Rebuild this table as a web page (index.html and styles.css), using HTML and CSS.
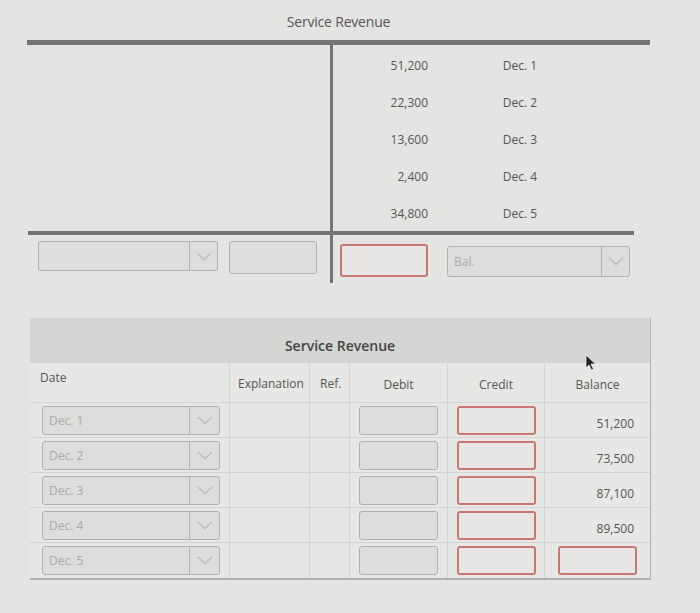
FILE: index.html
```html
<!DOCTYPE html>
<html>
<head>
<meta charset="utf-8">
<link rel="stylesheet" href="styles.css">
</head>
<body>
<div class="page">
  <section class="tacct">
    <div class="tacct-title">Service Revenue</div>
    <div class="tacct-grid">
      <div class="tside tleft">
        <div class="tbody"></div>
        <div class="tinputs">
          <div class="dd dd-left"><span class="dd-text"></span><span class="dd-arrow"><svg width="16" height="9" viewBox="0 0 16 9"><polyline points="1,1 8,7.5 15,1" fill="none" stroke="#bcbcba" stroke-width="1.4"/></svg></span></div>
          <div class="box box-grey box-amt"></div>
        </div>
      </div>
      <div class="tside tright">
        <div class="tbody">
          <div class="trow"><span class="tamt">51,200</span><span class="tdate">Dec. 1</span></div>
          <div class="trow"><span class="tamt">22,300</span><span class="tdate">Dec. 2</span></div>
          <div class="trow"><span class="tamt">13,600</span><span class="tdate">Dec. 3</span></div>
          <div class="trow"><span class="tamt">2,400</span><span class="tdate">Dec. 4</span></div>
          <div class="trow"><span class="tamt">34,800</span><span class="tdate">Dec. 5</span></div>
        </div>
        <div class="tinputs">
          <div class="box box-red box-amt"></div>
          <div class="dd dd-bal"><span class="dd-text">Bal.</span><span class="dd-arrow"><svg width="16" height="9" viewBox="0 0 16 9"><polyline points="1,1 8,7.5 15,1" fill="none" stroke="#bcbcba" stroke-width="1.4"/></svg></span></div>
        </div>
      </div>
    </div>
  </section>

  <section class="ledger">
    <div class="ledger-head">Service Revenue
      <svg class="cursor" width="12" height="17" viewBox="0 0 12 17"><path d="M1 1 L1 14 L4 11 L6.5 16 L8.5 15 L6 10 L10.5 10 Z" fill="#222" stroke="#eee" stroke-width="0.8"/></svg>
    </div>
    <div class="lgrid">
      <div class="hcell hdate">Date</div>
      <div class="hcell hexpl">Explanation</div>
      <div class="hcell href">Ref.</div>
      <div class="hcell hc">Debit</div>
      <div class="hcell hc">Credit</div>
      <div class="hcell hc hbal">Balance</div>

      <div class="cell"><div class="dd dd-row"><span class="dd-text">Dec. 1</span><span class="dd-arrow"><svg width="16" height="9" viewBox="0 0 16 9"><polyline points="1,1 8,7.5 15,1" fill="none" stroke="#bcbcba" stroke-width="1.4"/></svg></span></div></div>
      <div class="cell"></div><div class="cell"></div>
      <div class="cell cc"><div class="box box-grey box-row"></div></div>
      <div class="cell cc"><div class="box box-red box-row"></div></div>
      <div class="cell cbal">51,200</div>

      <div class="cell"><div class="dd dd-row"><span class="dd-text">Dec. 2</span><span class="dd-arrow"><svg width="16" height="9" viewBox="0 0 16 9"><polyline points="1,1 8,7.5 15,1" fill="none" stroke="#bcbcba" stroke-width="1.4"/></svg></span></div></div>
      <div class="cell"></div><div class="cell"></div>
      <div class="cell cc"><div class="box box-grey box-row"></div></div>
      <div class="cell cc"><div class="box box-red box-row"></div></div>
      <div class="cell cbal">73,500</div>

      <div class="cell"><div class="dd dd-row"><span class="dd-text">Dec. 3</span><span class="dd-arrow"><svg width="16" height="9" viewBox="0 0 16 9"><polyline points="1,1 8,7.5 15,1" fill="none" stroke="#bcbcba" stroke-width="1.4"/></svg></span></div></div>
      <div class="cell"></div><div class="cell"></div>
      <div class="cell cc"><div class="box box-grey box-row"></div></div>
      <div class="cell cc"><div class="box box-red box-row"></div></div>
      <div class="cell cbal">87,100</div>

      <div class="cell"><div class="dd dd-row"><span class="dd-text">Dec. 4</span><span class="dd-arrow"><svg width="16" height="9" viewBox="0 0 16 9"><polyline points="1,1 8,7.5 15,1" fill="none" stroke="#bcbcba" stroke-width="1.4"/></svg></span></div></div>
      <div class="cell"></div><div class="cell"></div>
      <div class="cell cc"><div class="box box-grey box-row"></div></div>
      <div class="cell cc"><div class="box box-red box-row"></div></div>
      <div class="cell cbal">89,500</div>

      <div class="cell last"><div class="dd dd-row"><span class="dd-text">Dec. 5</span><span class="dd-arrow"><svg width="16" height="9" viewBox="0 0 16 9"><polyline points="1,1 8,7.5 15,1" fill="none" stroke="#bcbcba" stroke-width="1.4"/></svg></span></div></div>
      <div class="cell last"></div><div class="cell last"></div>
      <div class="cell cc last"><div class="box box-grey box-row"></div></div>
      <div class="cell cc last"><div class="box box-red box-row"></div></div>
      <div class="cell cc last"><div class="box box-red box-row"></div></div>
    </div>
  </section>
</div>
</body>
</html>
```
FILE: styles.css
```css
html, body {
  margin: 0;
  padding: 0;
  background: #e4e4e2;
}
body {
  font-family: "Open Sans", "Liberation Sans", sans-serif;
  color: #555;
  font-size: 12px;
  width: 700px;
  height: 613px;
  overflow: hidden;
}
.page {
  padding-top: 12px;
}

/* T-account */
.tacct {
  margin-left: 27px;
  width: 623px;
}
.tacct-title {
  text-align: center;
  font-size: 14px;
  color: #555;
  line-height: 20px;
  height: 28px;
  letter-spacing: -0.2px;
}
.tacct-grid {
  display: grid;
  grid-template-columns: 303px 320px;
  border-top: 5px solid #747474;
}
.tside .tbody {
  height: 190px;
  box-sizing: border-box;
  padding-top: 2px;
  border-bottom: 4px solid #727272;
}
.tright {
  border-left: 3px solid #747474;
  padding-bottom: 6px;
}
.tright .tbody {
  margin-right: 16px;
}
.tleft .tbody {
  margin-left: 1px;
}
.trow {
  display: flex;
  height: 37px;
  align-items: center;
}
.tamt {
  width: 95px;
  text-align: right;
}
.tdate {
  width: 184px;
  text-align: center;
}
.tinputs {
  display: flex;
  align-items: flex-start;
  padding-top: 6px;
}
.tleft .tinputs {
  padding-left: 11px;
  gap: 11px;
}
.tright .tinputs {
  padding-left: 7px;
  gap: 19px;
  padding-top: 9px;
}

/* controls */
.dd {
  display: flex;
  box-sizing: border-box;
  border: 1px solid #b0b0ae;
  border-radius: 3px;
  background: #dddddb;
  color: #ababa9;
  align-items: stretch;
}
.dd-text {
  flex: 1;
  display: flex;
  align-items: center;
  padding-left: 6px;
}
.dd-arrow {
  width: 27px;
  border-left: 1px solid #b0b0ae;
  display: flex;
  align-items: center;
  justify-content: center;
}
.dd-left {
  width: 180px;
  height: 30px;
}
.dd-bal {
  width: 183px;
  height: 31px;
  margin-top: 2px;
}
.box {
  box-sizing: border-box;
  border-radius: 3px;
}
.box-grey {
  border: 1px solid #b0b0ae;
  background: #dddddb;
}
.box-red {
  border: 2px solid #c8786f;
  background: #e9e7e5;
}
.box-amt {
  width: 88px;
  height: 33px;
}

/* ledger */
.ledger {
  margin-top: 35px;
  margin-left: 30px;
  width: 620px;
  position: relative;
  border-right: 1px solid #b4b4b2;
  border-bottom: 2px solid #b0b0ae;
  background: #e7e7e5;
}
.ledger-head {
  height: 45px;
  background: #d5d5d3;
  text-align: center;
  font-size: 14px;
  font-weight: 600;
  color: #444;
  box-sizing: border-box;
  padding-top: 18px;
  position: relative;
}
.cursor {
  position: absolute;
  left: 555px;
  top: 36px;
}
.lgrid {
  display: grid;
  grid-template-columns: 200px 80px 40px 98px 97px 105px;
  grid-template-rows: 40px repeat(5, 35px);
}
.hcell {
  border-right: 1px solid #d3d3d1;
  border-bottom: 1px solid #d3d3d1;
  color: #555;
  display: flex;
  align-items: center;
}
.hbal {
  border-right: none;
}
.hdate {
  align-items: flex-start;
  padding: 6px 0 0 10px;
  box-sizing: border-box;
}
.hexpl {
  padding-left: 8px;
  padding-top: 2px;
}
.href {
  padding-left: 10px;
  padding-top: 2px;
}
.hc {
  justify-content: center;
  padding-top: 4px;
}
.cell {
  border-right: 1px solid #d3d3d1;
  border-bottom: 1px solid #d3d3d1;
  display: flex;
  align-items: center;
}
.cell:nth-child(6n) {
  border-right: none;
}
.cell.last {
  border-bottom: none;
}
.dd-row {
  width: 178px;
  height: 29px;
  margin-left: 12px;
}
.dd-row .dd-arrow {
  width: 29px;
}
.cc {
  justify-content: center;
}
.box-row {
  width: 79px;
  height: 29px;
}
.cbal {
  justify-content: flex-end;
  padding-right: 16px;
  padding-top: 6px;
}
```
